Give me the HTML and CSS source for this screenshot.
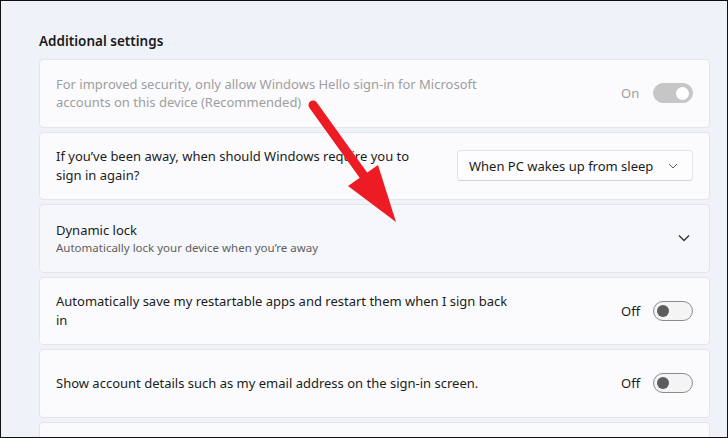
FILE: index.html
```html
<!DOCTYPE html>
<html lang="en">
<head>
<meta charset="UTF-8">
<title>Sign-in options</title>
<link rel="stylesheet" href="styles.css">
</head>
<body>
<div class="frame">
    <h2 class="section-title">Additional settings</h2>

    <div class="card disabled">
        <div class="card-text">For improved security, only allow Windows Hello sign-in for Microsoft accounts on this device (Recommended)</div>
        <div class="control">
            <span class="state">On</span>
            <span class="toggle on"><span class="knob"></span></span>
        </div>
    </div>

    <div class="card">
        <div class="card-text narrow">If you’ve been away, when should Windows require you to sign in again?</div>
        <div class="dropdown">
            <span>When PC wakes up from sleep</span>
            <svg class="chev-small" width="10" height="6" viewBox="0 0 10 6"><path d="M1 1l4 4 4-4" fill="none" stroke="#5c5c5c" stroke-width="1"/></svg>
        </div>
    </div>

    <div class="card expander">
        <div class="card-text">
            <div class="card-title">Dynamic lock</div>
            <div class="card-sub">Automatically lock your device when you’re away</div>
        </div>
        <svg class="chev" width="12" height="8" viewBox="0 0 12 8"><path d="M1 1.5l5 5 5-5" fill="none" stroke="#333" stroke-width="1.3"/></svg>
    </div>

    <div class="card">
        <div class="card-text">Automatically save my restartable apps and restart them when I sign back in</div>
        <div class="control">
            <span class="state">Off</span>
            <span class="toggle"><span class="knob"></span></span>
        </div>
    </div>

    <div class="card">
        <div class="card-text">Show account details such as my email address on the sign-in screen.</div>
        <div class="control">
            <span class="state">Off</span>
            <span class="toggle"><span class="knob"></span></span>
        </div>
    </div>

    <div class="card"></div>

    <!-- red annotation arrow -->
    <svg class="arrow" width="728" height="438" viewBox="0 0 728 438">
        <line x1="313" y1="105" x2="364" y2="176" stroke="#ed1c24" stroke-width="9" stroke-linecap="round"/>
        <polygon points="348,186 378,165 396,222" fill="#ed1c24"/>
    </svg>
</div>
</body>
</html>
```

FILE: styles.css
```css
html, body {
    margin: 0;
    padding: 0;
}
body {
    font-family: "Noto Sans", "Open Sans", sans-serif;
    font-size: 13px;
    color: #1b1b1b;
}
.frame {
    position: relative;
    box-sizing: border-box;
    width: 728px;
    height: 438px;
    overflow: hidden;
    border: 1px solid #111;
    background: #eff3f9;
    padding: 30px 17px 0 38px;
    display: flex;
    flex-direction: column;
    gap: 4px;
}
.section-title {
    font-size: 13.5px;
    font-weight: 600;
    margin: 0 0 4px;
    line-height: 20px;
}
.card {
    flex-shrink: 0;
    box-sizing: border-box;
    height: 68.5px;
    background: #fbfbfd;
    border: 1px solid #e3e5ea;
    border-radius: 4px;
    padding: 0 16px;
    display: flex;
    align-items: center;
    justify-content: space-between;
}
.card-text {
    max-width: 462px;
    line-height: 18.5px;
}
.card-text.narrow {
    max-width: 380px;
}
.disabled .card-text,
.disabled .state {
    color: #9e9e9e;
}
.expander {
    background: #f6f7fa;
}
.card-title {
    line-height: 19px;
}
.card-sub {
    font-size: 11.5px;
    color: #5f5f5f;
    line-height: 16px;
}
.chev {
    margin-right: 3px;
}
.control {
    display: flex;
    align-items: center;
    gap: 14px;
}
.state {
    width: 18px;
}
.toggle {
    box-sizing: border-box;
    width: 40px;
    height: 20px;
    border-radius: 10px;
    border: 1px solid #8a8a8a;
    background: #f4f4f5;
    display: flex;
    align-items: center;
    padding: 0 3px;
}
.toggle .knob {
    width: 12px;
    height: 12px;
    border-radius: 50%;
    background: #5c5c5c;
}
.toggle.on {
    background: #c6c6c6;
    border-color: #c6c6c6;
    justify-content: flex-end;
}
.toggle.on .knob {
    background: #fff;
    width: 13px;
    height: 13px;
}
.dropdown {
    box-sizing: border-box;
    width: 236px;
    height: 31px;
    background: #fdfdfd;
    border: 1px solid #e2e3e6;
    border-bottom-color: #d2d3d6;
    border-radius: 4px;
    display: flex;
    align-items: center;
    justify-content: space-between;
    padding: 0 14px 0 11px;
}
.arrow {
    position: absolute;
    left: -1px;
    top: -1px;
    pointer-events: none;
}
```
